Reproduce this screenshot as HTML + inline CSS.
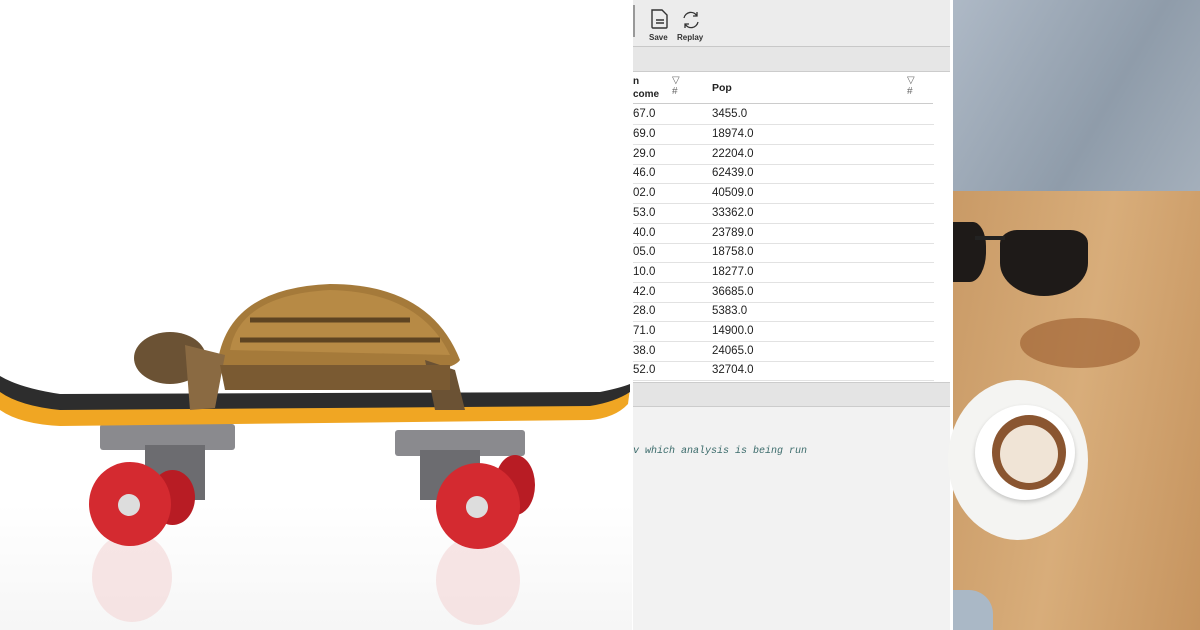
<!DOCTYPE html>
<html><head><style>
body{margin:0;width:1200px;height:630px;position:relative;overflow:hidden;background:#fff;font-family:"Liberation Sans",sans-serif}
.a{position:absolute}
.row{position:absolute;left:633px;width:301px;height:19.7px;border-bottom:1px solid #e2e2e2;font-size:11.5px;color:#222;line-height:21px}
.row span{position:absolute}
</style></head><body>
<div class="a" style="left:0;top:0;width:632px;height:630px;background:linear-gradient(#fff 0,#fff 80%,#f6f6f6 100%)"></div>
<div class="a" style="left:92px;top:532px;width:80px;height:90px;border-radius:50%;background:#f3d6d6;opacity:.6"></div>
<div class="a" style="left:436px;top:535px;width:84px;height:90px;border-radius:50%;background:#f3d6d6;opacity:.6"></div>
<!-- trucks -->
<div class="a" style="left:100px;top:424px;width:135px;height:26px;background:#8a8a8e;border-radius:3px"></div>
<div class="a" style="left:145px;top:445px;width:60px;height:55px;background:#6c6c70"></div>
<div class="a" style="left:395px;top:430px;width:130px;height:26px;background:#8a8a8e;border-radius:3px"></div>
<div class="a" style="left:420px;top:450px;width:60px;height:50px;background:#6c6c70"></div>
<!-- wheels -->
<div class="a" style="left:150px;top:470px;width:45px;height:55px;border-radius:50%;background:#b81c24"></div>
<div class="a" style="left:89px;top:462px;width:82px;height:84px;border-radius:50%;background:#d42a30"></div>
<div class="a" style="left:118px;top:494px;width:22px;height:22px;border-radius:50%;background:#ddd"></div>
<div class="a" style="left:495px;top:455px;width:40px;height:60px;border-radius:50%;background:#b81c24"></div>
<div class="a" style="left:436px;top:463px;width:84px;height:86px;border-radius:50%;background:#d42a30"></div>
<div class="a" style="left:466px;top:496px;width:22px;height:22px;border-radius:50%;background:#ddd"></div>
<!-- board -->
<svg class="a" style="left:0;top:370px" width="632" height="70">
<path d="M0 12 Q20 22 60 28 L600 28 Q620 24 630 18 L628 34 Q615 48 590 50 L60 56 Q20 54 0 40Z" fill="#f0a623"/>
<path d="M0 6 Q20 18 60 24 L600 22 Q620 18 630 14 L630 22 Q615 32 590 36 L60 40 Q20 36 0 22Z" fill="#2d2d2d"/>
</svg>
<!-- turtle -->
<svg class="a" style="left:130px;top:280px" width="340" height="140">
<path d="M88 80 Q100 8 200 4 Q300 4 330 80 Q320 96 200 100 Q95 98 88 80Z" fill="#a57a3a"/>
<path d="M100 70 Q110 15 200 10 Q290 12 320 75 Z" fill="#b78a45"/>
<path d="M120 40 L280 40 M110 60 L310 60" stroke="#5e4422" stroke-width="5"/>
<ellipse cx="40" cy="78" rx="36" ry="26" fill="#6b5234"/>
<path d="M55 65 L95 75 L85 128 L60 130Z" fill="#8a6a42"/>
<path d="M295 80 L325 90 L335 130 L305 130Z" fill="#6b5234"/>
<path d="M90 85 L320 85 L320 110 L95 110Z" fill="#7a5a32"/>
</svg>
<!-- middle panel -->
<div class="a" style="left:633px;top:0;width:317px;height:630px;background:#f2f2f2"></div>
<div class="a" style="left:633px;top:0;width:317px;height:46px;background:#ececec;border-bottom:1px solid #c8c8c8"></div>
<div class="a" style="left:633px;top:5px;width:2px;height:32px;background:#999"></div>
<svg class="a" style="left:649px;top:8px" width="22" height="22"><path d="M3 2h10l5 5v12a1 1 0 0 1-1 1H4a1 1 0 0 1-1-1z" fill="none" stroke="#333" stroke-width="1.4"/><path d="M7 12h8M7 15h8" stroke="#333" stroke-width="1.4"/></svg>
<svg class="a" style="left:680px;top:9px" width="22" height="22"><path d="M4 9a7 7 0 0 1 13-2M18 13a7 7 0 0 1-13 2" fill="none" stroke="#333" stroke-width="1.3"/><path d="M17 3v4h-4M5 19v-4h4" fill="none" stroke="#333" stroke-width="1.3"/></svg>
<div class="a" style="left:649px;top:33px;font-size:8px;font-weight:bold;color:#333">Save</div>
<div class="a" style="left:677px;top:33px;font-size:8px;font-weight:bold;color:#333">Replay</div>
<div class="a" style="left:633px;top:47px;width:317px;height:24px;background:#e6e6e6;border-bottom:1px solid #ccc"></div>
<div class="a" style="left:633px;top:72px;width:317px;height:310px;background:#fff"></div>
<div class="a" style="left:633px;top:75px;font-size:10px;font-weight:bold;color:#222;line-height:13px">n<br>come</div>
<div class="a" style="left:672px;top:75px;font-size:10px;color:#666;line-height:11px">▽<br>#</div>
<div class="a" style="left:712px;top:82px;font-size:10.5px;font-weight:bold;color:#222">Pop</div>
<div class="a" style="left:907px;top:75px;font-size:10px;color:#666;line-height:11px">▽<br>#</div>
<div class="a" style="left:633px;top:103px;width:300px;height:1px;background:#ccc"></div>
<div class="row" style="top:104px"><span>67.0</span><span style="left:79px">3455.0</span></div>
<div class="row" style="top:124px"><span>69.0</span><span style="left:79px">18974.0</span></div>
<div class="row" style="top:144px"><span>29.0</span><span style="left:79px">22204.0</span></div>
<div class="row" style="top:163px"><span>46.0</span><span style="left:79px">62439.0</span></div>
<div class="row" style="top:183px"><span>02.0</span><span style="left:79px">40509.0</span></div>
<div class="row" style="top:203px"><span>53.0</span><span style="left:79px">33362.0</span></div>
<div class="row" style="top:223px"><span>40.0</span><span style="left:79px">23789.0</span></div>
<div class="row" style="top:242px"><span>05.0</span><span style="left:79px">18758.0</span></div>
<div class="row" style="top:262px"><span>10.0</span><span style="left:79px">18277.0</span></div>
<div class="row" style="top:282px"><span>42.0</span><span style="left:79px">36685.0</span></div>
<div class="row" style="top:301px"><span>28.0</span><span style="left:79px">5383.0</span></div>
<div class="row" style="top:321px"><span>71.0</span><span style="left:79px">14900.0</span></div>
<div class="row" style="top:341px"><span>38.0</span><span style="left:79px">24065.0</span></div>
<div class="row" style="top:360px"><span>52.0</span><span style="left:79px">32704.0</span></div>
<div class="a" style="left:633px;top:382px;width:317px;height:23px;background:#e4e4e4;border-top:1px solid #ccc;border-bottom:1px solid #ccc"></div>
<div class="a" style="left:633px;top:446px;font-family:'Liberation Mono',monospace;font-style:italic;font-size:10px;color:#3a6a6a">v which analysis is being run</div>
<!-- right panel -->
<div class="a" style="left:953px;top:0;width:247px;height:191px;background:linear-gradient(120deg,#aeb9c6,#8f9caa 60%,#a4afbb)"></div>
<div class="a" style="left:953px;top:191px;width:247px;height:439px;background:linear-gradient(100deg,#c99a66,#d8ad7a 50%,#c6945f)"></div>
<div class="a" style="left:1020px;top:318px;width:120px;height:50px;border-radius:50%;background:#9a5a2c;opacity:.6"></div>
<div class="a" style="left:953px;top:222px;width:33px;height:60px;border-radius:0 40% 50% 0;background:#1e1a18"></div>
<div class="a" style="left:1000px;top:230px;width:88px;height:66px;border-radius:20% 20% 50% 50%;background:#1e1a18"></div>
<div class="a" style="left:975px;top:236px;width:30px;height:4px;background:#222"></div>
<div class="a" style="left:948px;top:380px;width:140px;height:160px;border-radius:50%;background:#f4f4f2"></div>
<div class="a" style="left:975px;top:405px;width:100px;height:95px;border-radius:50%;background:#fff;box-shadow:0 2px 4px rgba(0,0,0,.2)"></div>
<div class="a" style="left:992px;top:415px;width:74px;height:75px;border-radius:50%;background:#8a5530"></div>
<div class="a" style="left:1000px;top:425px;width:58px;height:58px;border-radius:50%;background:#f0e4d6"></div>
<div class="a" style="left:953px;top:590px;width:40px;height:40px;background:#aab8c6;border-radius:0 60% 0 0"></div>
</body></html>
